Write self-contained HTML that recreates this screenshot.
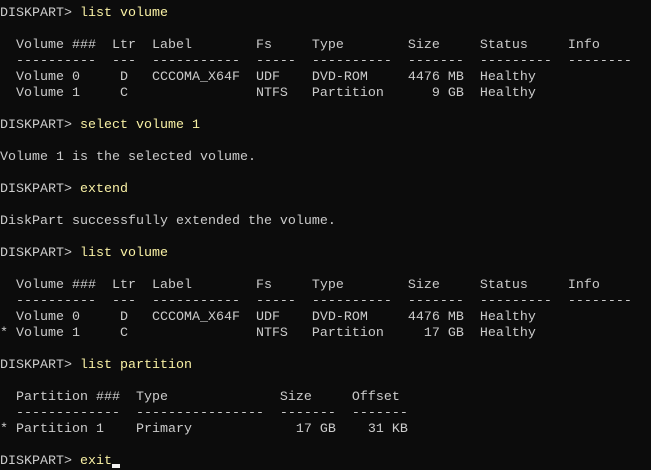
<!DOCTYPE html>
<html>
<head>
<meta charset="utf-8">
<style>
html,body{margin:0;padding:0;background:#0c0c0c;width:651px;height:468px;overflow:hidden}
pre{position:absolute;left:0;top:6px;margin:0;font-family:"Liberation Mono",monospace;font-size:13.333px;line-height:16px;color:#cccccc;white-space:pre}
.y{color:#f9f1a5}
#c{position:absolute;left:112px;top:464px;width:8px;height:4px;background:#f2f2f2}
</style>
</head>
<body>
<pre>DISKPART&gt; <span class="y">list volume</span>

  Volume ###  Ltr  Label        Fs     Type        Size     Status     Info
  ----------  ---  -----------  -----  ----------  -------  ---------  --------
  Volume 0     D   CCCOMA_X64F  UDF    DVD-ROM     4476 MB  Healthy
  Volume 1     C                NTFS   Partition      9 GB  Healthy

DISKPART&gt; <span class="y">select volume 1</span>

Volume 1 is the selected volume.

DISKPART&gt; <span class="y">extend</span>

DiskPart successfully extended the volume.

DISKPART&gt; <span class="y">list volume</span>

  Volume ###  Ltr  Label        Fs     Type        Size     Status     Info
  ----------  ---  -----------  -----  ----------  -------  ---------  --------
  Volume 0     D   CCCOMA_X64F  UDF    DVD-ROM     4476 MB  Healthy
* Volume 1     C                NTFS   Partition     17 GB  Healthy

DISKPART&gt; <span class="y">list partition</span>

  Partition ###  Type              Size     Offset
  -------------  ----------------  -------  -------
* Partition 1    Primary             17 GB    31 KB

DISKPART&gt; <span class="y">exit</span></pre>
<div id="c"></div>
</body>
</html>
